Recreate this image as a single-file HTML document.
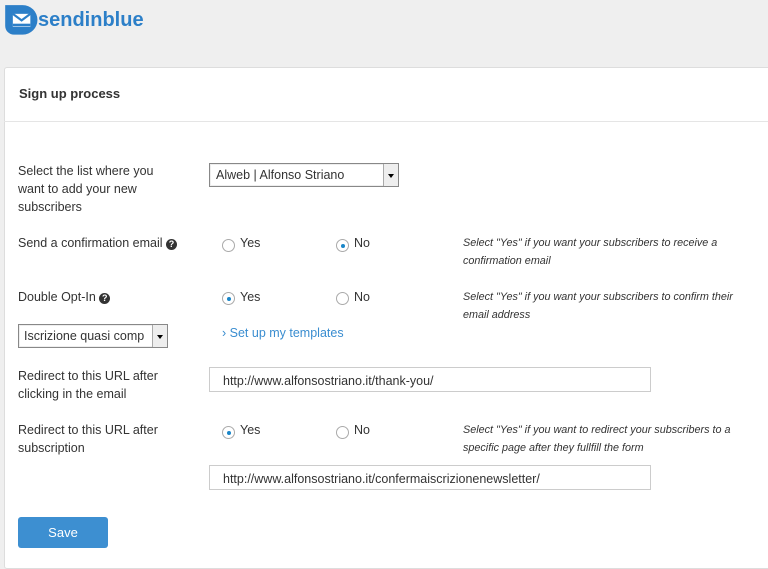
<!DOCTYPE html>
<html><head><style>
body{margin:0;width:768px;height:553px;background:#efefef;font-family:"Liberation Sans",sans-serif;position:relative;overflow:hidden;color:#333}
.a{position:absolute;white-space:nowrap}
.panel{position:absolute;left:4px;top:67px;width:780px;height:500px;background:#fff;border:1px solid #ddd;border-radius:3px}
.lbl{font-size:12.5px;line-height:18px;color:#333}
.help{font-size:10.8px;font-style:italic;line-height:18px;color:#333}
.r{width:13px;height:13px;border:1px solid #aaa;border-radius:50%;background:#fff;box-sizing:border-box}
.r.on::after{content:"";position:absolute;left:3.5px;top:3.5px;width:4px;height:4px;border-radius:50%;background:#1a86c8}
.sel{border:1px solid #888;background:#fff;font-size:12.5px;box-sizing:border-box;box-shadow:inset 0 0 0 1px #eee}
.sel .ar{position:absolute;right:0;top:0;bottom:0;width:14px;border-left:1px solid #aaa;background:#eee}
.sel .ar::after{content:"";position:absolute;left:4px;top:45%;border:3px solid transparent;border-top:4px solid #000}
.inp{border:1px solid #ccc;background:#fff;font-size:12.5px;box-sizing:border-box;padding:6px 13px}
</style></head><body>
<svg class="a" style="left:3px;top:4px" width="35" height="35" viewBox="0 0 32 32"><path d="M2 1h16a13.5 13.5 0 0 1 0 27H10a8 8 0 0 1-8-8z" fill="#2c7fc8"/><rect x="9" y="9" width="16" height="12" fill="#fff"/><path d="M9 9l8 6 8-6" stroke="#2c7fc8" stroke-width="2" fill="none"/><rect x="9" y="18" width="16" height="2.5" fill="#2c7fc8"/></svg>
<div class="a" style="left:38px;top:9px;font-size:20px;font-weight:bold;color:#2c7fc8">sendinblue</div>
<div class="panel"></div>
<div class="a" style="left:4px;top:121px;width:764px;border-top:1px solid #e5e5e5"></div>
<div class="a" style="left:19px;top:86px;font-size:13px;font-weight:bold;color:#333">Sign up process</div>

<div class="a lbl" style="left:18px;top:162px">Select the list where you<br>want to add your new<br>subscribers</div>
<div class="a sel" style="left:209px;top:163px;width:190px;height:24px;padding:4px 6px">Alweb | Alfonso Striano<div class="ar"></div></div>

<div class="a lbl" style="left:18px;top:234px">Send a confirmation email <span style="display:inline-block;width:11px;height:11px;border-radius:50%;background:#333;color:#fff;font-size:9px;line-height:11px;text-align:center;font-weight:bold">?</span></div>
<div class="a r" style="left:222px;top:239px"></div><div class="a lbl" style="left:240px;top:234px">Yes</div>
<div class="a r on" style="left:336px;top:239px"></div><div class="a lbl" style="left:354px;top:234px">No</div>
<div class="a help" style="left:463px;top:234px">Select "Yes" if you want your subscribers to receive a<br>confirmation email</div>

<div class="a lbl" style="left:18px;top:288px">Double Opt-In <span style="display:inline-block;width:11px;height:11px;border-radius:50%;background:#333;color:#fff;font-size:9px;line-height:11px;text-align:center;font-weight:bold">?</span></div>
<div class="a r on" style="left:222px;top:292px"></div><div class="a lbl" style="left:240px;top:288px">Yes</div>
<div class="a r" style="left:336px;top:292px"></div><div class="a lbl" style="left:354px;top:288px">No</div>
<div class="a help" style="left:463px;top:288px">Select "Yes" if you want your subscribers to confirm their<br>email address</div>

<div class="a sel" style="left:18px;top:324px;width:150px;height:24px;padding:4px 5px;overflow:hidden">Iscrizione quasi comp<div class="ar"></div></div>
<div class="a lbl" style="left:222px;top:324px;color:#3a8dd0">› Set up my templates</div>

<div class="a lbl" style="left:18px;top:367px">Redirect to this URL after<br>clicking in the email</div>
<div class="a inp" style="left:209px;top:367px;width:442px;height:25px">http://www.alfonsostriano.it/thank-you/</div>

<div class="a lbl" style="left:18px;top:421px">Redirect to this URL after<br>subscription</div>
<div class="a r on" style="left:222px;top:426px"></div><div class="a lbl" style="left:240px;top:421px">Yes</div>
<div class="a r" style="left:336px;top:426px"></div><div class="a lbl" style="left:354px;top:421px">No</div>
<div class="a help" style="left:463px;top:421px">Select "Yes" if you want to redirect your subscribers to a<br>specific page after they fullfill the form</div>
<div class="a inp" style="left:209px;top:465px;width:442px;height:25px">http://www.alfonsostriano.it/confermaiscrizionenewsletter/</div>

<div class="a" style="left:18px;top:517px;width:90px;height:31px;background:#3d8fd1;border-radius:3px;color:#fff;font-size:13px;text-align:center;line-height:31px">Save</div>
</body></html>
